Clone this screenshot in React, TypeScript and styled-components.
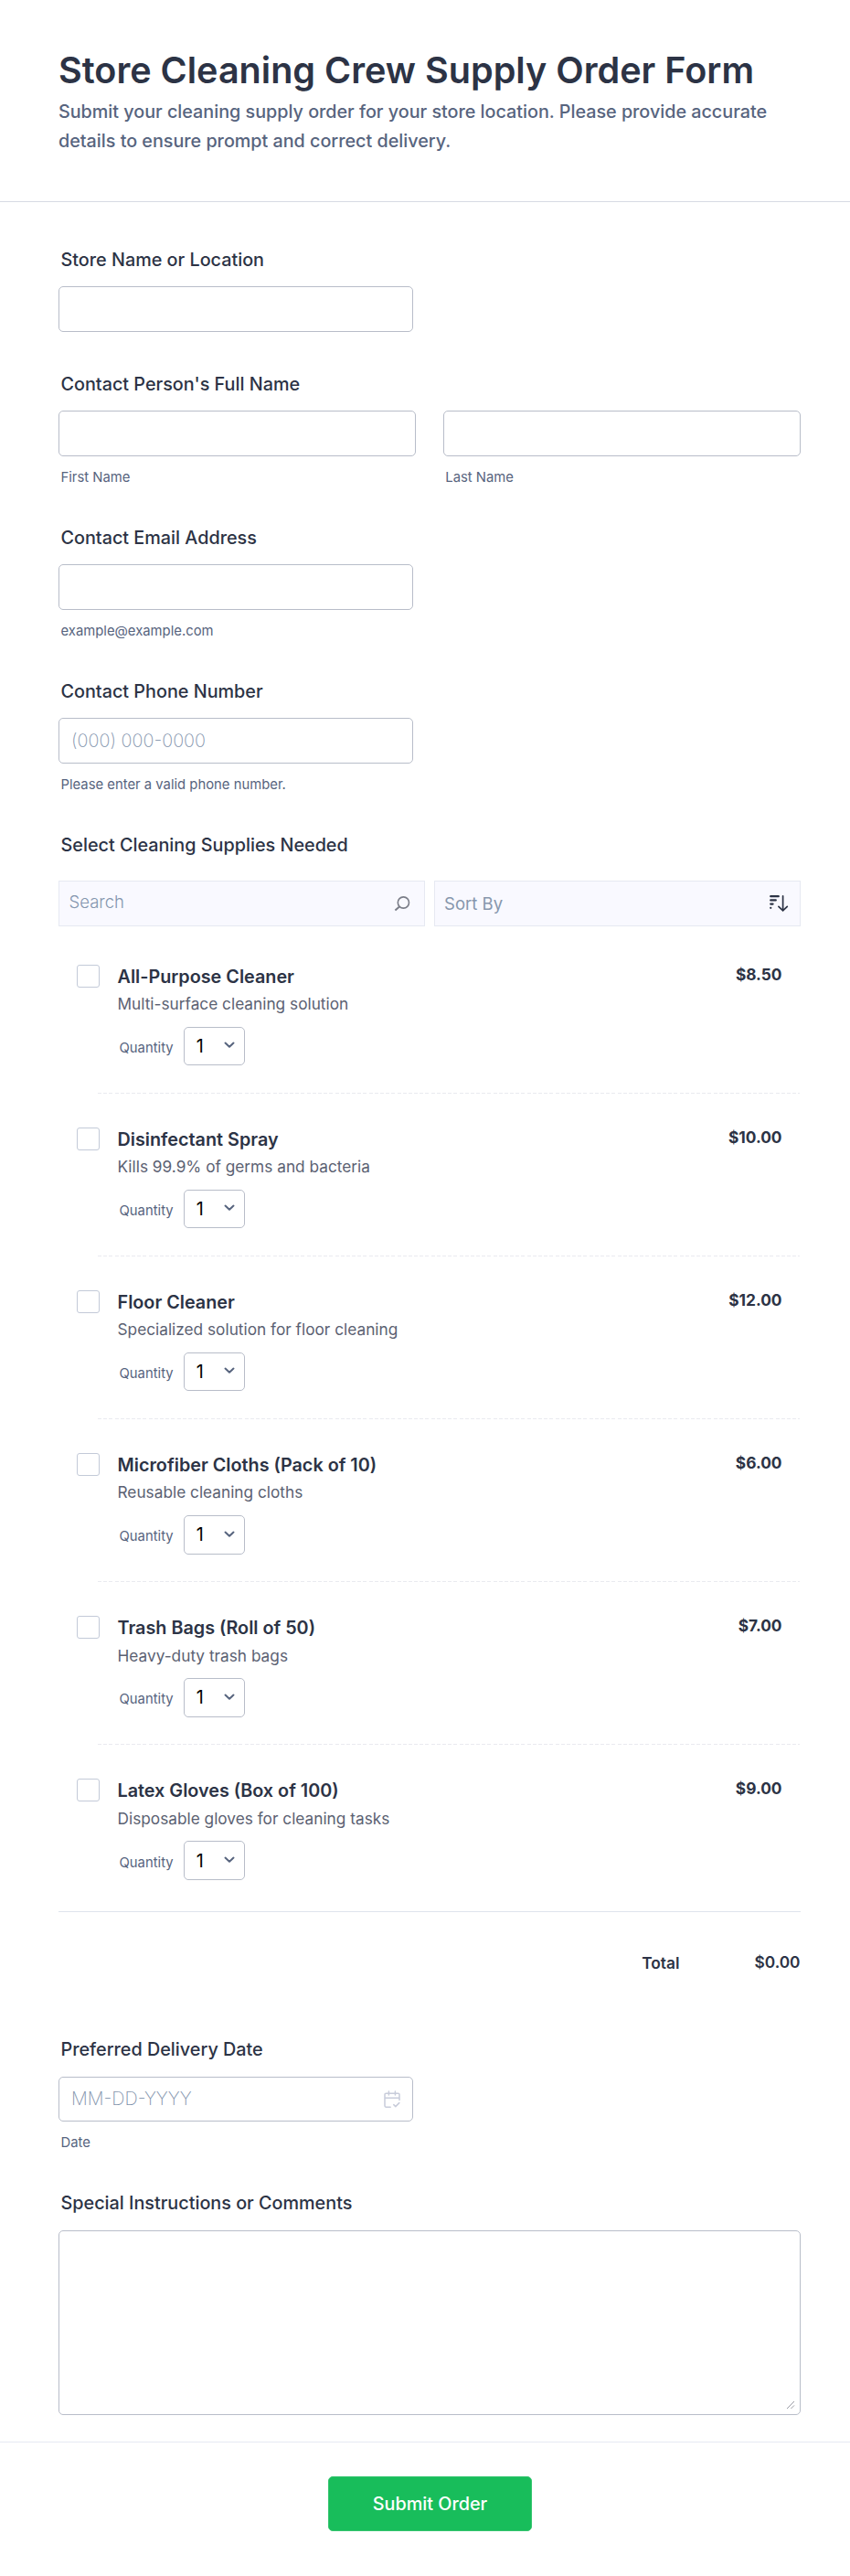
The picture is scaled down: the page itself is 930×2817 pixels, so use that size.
import React from 'react';
import styled, { createGlobalStyle } from 'styled-components';

const GlobalStyle = createGlobalStyle`
  *, *::before, *::after { box-sizing: border-box; }
  body { margin: 0; background: #fff; color: #2c3345; font-family: Inter, "Liberation Sans", sans-serif; }
  input, select, textarea, button { font-family: inherit; margin: 0; }
`;

const Page = styled.form`
  width: 930px;
  min-height: 2817px;
  background: #fff;
`;

const Header = styled.header`
  height: 221px;
  padding: 53px 64px 0;
  border-bottom: 1.5px solid #d7dae4;
`;

const Title = styled.h1`
  margin: 0;
  font-size: 39.57px;
  line-height: 48px;
  font-weight: 600;
  white-space: nowrap;
`;

const Intro = styled.p`
  margin: 5px 0 0;
  font-size: 19.74px;
  line-height: 32px;
  font-weight: 500;
  color: #57647e;
  white-space: nowrap;
`;

const Body = styled.main`
  display: flex;
  flex-direction: column;
  gap: 45.5px;
  padding: 51px 54.5px 30px 64px;
`;

const Field = styled.section`
  display: flex;
  flex-direction: column;
`;

const Label = styled.label`
  padding-left: 2.5px;
  margin-bottom: 17px;
  font-size: 19.79px;
  line-height: 24px;
  font-weight: 500;
`;

const TextInput = styled.input<{ $wide?: boolean }>`
  width: ${(p) => (p.$wide ? '100%' : '388px')};
  height: 49.5px;
  padding: 0 13px;
  border: 1.24px solid #b8bdc9;
  border-radius: 5px;
  background: #fff;
  color: #2c3345;
  font-size: 19.79px;
  outline: none;
  &::placeholder { color: #7f92ab; font-weight: 250; opacity: 1; }
`;

const SubLabel = styled.span`
  margin-top: 14px;
  padding-left: 2.5px;
  font-size: 14.84px;
  line-height: 18px;
  color: #57647e;
`;

const NameRow = styled.div`
  display: grid;
  grid-template-columns: 1fr 1fr;
  column-gap: 30px;
`;

const NamePart = styled.div`
  display: flex;
  flex-direction: column;
`;

const Toolbar = styled.div`
  display: grid;
  grid-template-columns: 1fr 1fr;
  column-gap: 9.5px;
  margin: 10px 0 5px;
`;

const ToolBox = styled.div<{ $padRight: number }>`
  display: flex;
  align-items: center;
  justify-content: space-between;
  height: 49.5px;
  padding: 0 ${(p) => p.$padRight}px 0 10.5px;
  border: 1.5px solid #e6e9f2;
  background: #f9f9ff;
`;

const ToolInput = styled.input`
  flex: 1;
  min-width: 0;
  padding: 0 0 3px;
  border: 0;
  background: transparent;
  font-size: 18.55px;
  outline: none;
  &::placeholder { color: #8496ae; font-weight: 300; opacity: 1; }
`;

const ToolText = styled.span`
  font-size: 18.55px;
  color: #8797ad;
`;

const Items = styled.ul`
  margin: 0;
  padding: 0;
  list-style: none;
`;

const Item = styled.li`
  display: grid;
  grid-template-columns: 25px 1fr auto;
  column-gap: 20px;
  height: 178.1px;
  padding: 37px 20px 0 19.5px;
  background: repeating-linear-gradient(90deg, #e9eaf0 0 4px, transparent 4px 6.18px) 43px 100% / 768px 1px no-repeat;
  &:last-child { background: none; }
`;

const Check = styled.input`
  appearance: none;
  width: 25px;
  height: 25px;
  margin: 0;
  border: 1.24px solid #c3cad8;
  border-radius: 3px;
  background: #fff;
`;

const ItemText = styled.div`
  display: flex;
  flex-direction: column;
`;

const ItemName = styled.strong`
  margin-top: 1.5px;
  font-size: 19.79px;
  line-height: 24px;
  font-weight: 600;
`;

const ItemNote = styled.span`
  margin-top: 7.2px;
  font-size: 17.25px;
  line-height: 22px;
  color: #5b6172;
`;

const Quantity = styled.label`
  display: flex;
  align-items: center;
  gap: 11px;
  margin-top: 13.6px;
  padding-left: 2px;
  font-size: 14.84px;
  color: #57647e;
  & > span:first-child { padding-top: 4px; }
`;

const SelectWrap = styled.span`
  position: relative;
  display: block;
  width: 67px;
  height: 42.5px;
  & > svg { position: absolute; right: 10.5px; top: 16.5px; }
`;

const Select = styled.select`
  appearance: none;
  display: block;
  width: 100%;
  height: 100%;
  padding: 0 0 0 13px;
  border: 1.24px solid #b8bdc9;
  border-radius: 5px;
  background: #fff;
  color: #000;
  font-size: 19.79px;
`;

const Price = styled.b`
  font-size: 17.31px;
  line-height: 22px;
  font-weight: 700;
`;

const TotalRow = styled.div`
  display: flex;
  align-items: flex-start;
  justify-content: flex-end;
  height: 93.4px;
  margin-top: 4px;
  padding-top: 43.5px;
  border-top: 1.24px solid #dfe3ec;
  font-size: 17.31px;
  line-height: 22px;
  font-weight: 600;
`;

const TotalLabel = styled.span`
  padding-top: 1px;
`;

const TotalValue = styled.span`
  width: 132px;
  text-align: right;
`;

const InputWrap = styled.div`
  position: relative;
  display: flex;
  margin: 0.6px 0 -0.1px;
`;

const Overlay = styled.svg<{ $left: number; $top: number }>`
  position: absolute;
  left: ${(p) => p.$left}px;
  top: ${(p) => p.$top}px;
`;

const TextArea = styled.textarea`
  display: block;
  width: 100%;
  height: 201.5px;
  padding: 12px;
  border: 1.24px solid #b8bdc9;
  border-radius: 5px;
  font-size: 19.79px;
  resize: none;
  outline: none;
`;

const Footer = styled.footer`
  display: flex;
  justify-content: center;
  padding: 37px 0 0 11px;
  border-top: 1.24px solid #e6e9f2;
`;

const Submit = styled.button`
  width: 222.5px;
  height: 60px;
  padding: 0;
  border: 1px solid #35c56f;
  border-radius: 5px;
  background: #18bd5b;
  color: #fff;
  font-size: 19.79px;
  font-weight: 500;
`;

const SearchIcon = () => (
  <svg width="18" height="18" viewBox="0 0 18 18" fill="none" stroke="#7a7d88" strokeWidth="1.6">
    <circle cx="10.4" cy="8" r="6.1" />
    <path d="M6 12.5 1.4 16.6" strokeWidth="2" />
  </svg>
);

const SortIcon = () => (
  <svg width="22" height="20" viewBox="0 0 22 20" fill="none" stroke="#2c3345" strokeWidth="2.2" strokeLinecap="round">
    <path d="M2.2 2.2h8.6M2.2 6.4h5.6M2.2 10.6h2.4M2.2 14.8h.1" />
    <path d="M15.6 1.8v15.6M10.9 13.4l4.7 4.4 4.7-4.4" strokeWidth="1.7" />
  </svg>
);

const Chevron = () => (
  <svg width="12" height="8" viewBox="0 0 12 8" fill="none" stroke="#57647e" strokeWidth="2" strokeLinecap="round" strokeLinejoin="round">
    <path d="M1.5 1.6 6 5.8l4.5-4.2" />
  </svg>
);

const products = [
  { name: 'All-Purpose Cleaner', note: 'Multi-surface cleaning solution', price: '$8.50' },
  { name: 'Disinfectant Spray', note: 'Kills 99.9% of germs and bacteria', price: '$10.00' },
  { name: 'Floor Cleaner', note: 'Specialized solution for floor cleaning', price: '$12.00' },
  { name: 'Microfiber Cloths (Pack of 10)', note: 'Reusable cleaning cloths', price: '$6.00' },
  { name: 'Trash Bags (Roll of 50)', note: 'Heavy-duty trash bags', price: '$7.00' },
  { name: 'Latex Gloves (Box of 100)', note: 'Disposable gloves for cleaning tasks', price: '$9.00' },
];

export default function App() {
  return (
    <>
      <GlobalStyle />
      <Page>
        <Header>
          <Title>Store Cleaning Crew Supply Order Form</Title>
          <Intro>
            Submit your cleaning supply order for your store location. Please provide accurate
            <br />
            details to ensure prompt and correct delivery.
          </Intro>
        </Header>
        <Body>
          <Field>
            <Label>Store Name or Location</Label>
            <TextInput />
          </Field>
          <Field>
            <Label>Contact Person's Full Name</Label>
            <NameRow>
              <NamePart>
                <TextInput $wide />
                <SubLabel>First Name</SubLabel>
              </NamePart>
              <NamePart>
                <TextInput $wide />
                <SubLabel>Last Name</SubLabel>
              </NamePart>
            </NameRow>
          </Field>
          <Field>
            <Label>Contact Email Address</Label>
            <TextInput type="email" />
            <SubLabel>example@example.com</SubLabel>
          </Field>
          <Field>
            <Label>Contact Phone Number</Label>
            <TextInput type="tel" placeholder="(000) 000-0000" />
            <SubLabel>Please enter a valid phone number.</SubLabel>
          </Field>
          <Field>
            <Label>Select Cleaning Supplies Needed</Label>
            <Toolbar>
              <ToolBox $padRight={15}>
                <ToolInput placeholder="Search" />
                <SearchIcon />
              </ToolBox>
              <ToolBox $padRight={12}>
                <ToolText>Sort By</ToolText>
                <SortIcon />
              </ToolBox>
            </Toolbar>
            <Items>
              {products.map((p) => (
                <Item key={p.name}>
                  <Check type="checkbox" />
                  <ItemText>
                    <ItemName>{p.name}</ItemName>
                    <ItemNote>{p.note}</ItemNote>
                    <Quantity>
                      <span>Quantity</span>
                      <SelectWrap>
                        <Select defaultValue="1">
                          <option>1</option>
                        </Select>
                        <Chevron />
                      </SelectWrap>
                    </Quantity>
                  </ItemText>
                  <Price>{p.price}</Price>
                </Item>
              ))}
            </Items>
            <TotalRow>
              <TotalLabel>Total</TotalLabel>
              <TotalValue>$0.00</TotalValue>
            </TotalRow>
          </Field>
          <Field>
            <Label>Preferred Delivery Date</Label>
            <InputWrap>
              <TextInput placeholder="MM-DD-YYYY" />
              <Overlay $left={356} $top={15} width="18" height="20" viewBox="0 0 18 20" fill="none" stroke="#c8ccda" strokeWidth="1.5" strokeLinecap="round" strokeLinejoin="round">
                <path d="M7.2 18.2H2.4a1.4 1.4 0 0 1-1.4-1.4V4.6a1.4 1.4 0 0 1 1.4-1.4h13.2A1.4 1.4 0 0 1 17 4.6v6M1 8.2h16M5.4 1v4M12.4 1v4M10.8 15.6l2 2 4-4" />
              </Overlay>
            </InputWrap>
            <SubLabel>Date</SubLabel>
          </Field>
          <Field>
            <Label>Special Instructions or Comments</Label>
            <InputWrap>
              <TextArea />
              <Overlay $left={796} $top={186} width="10" height="10" viewBox="0 0 10 10" stroke="#9b9da5" strokeWidth="1">
                <path d="M1 9 9 1M5.4 9 9 5.4" />
              </Overlay>
            </InputWrap>
          </Field>
        </Body>
        <Footer>
          <Submit type="button">Submit Order</Submit>
        </Footer>
      </Page>
    </>
  );
}
